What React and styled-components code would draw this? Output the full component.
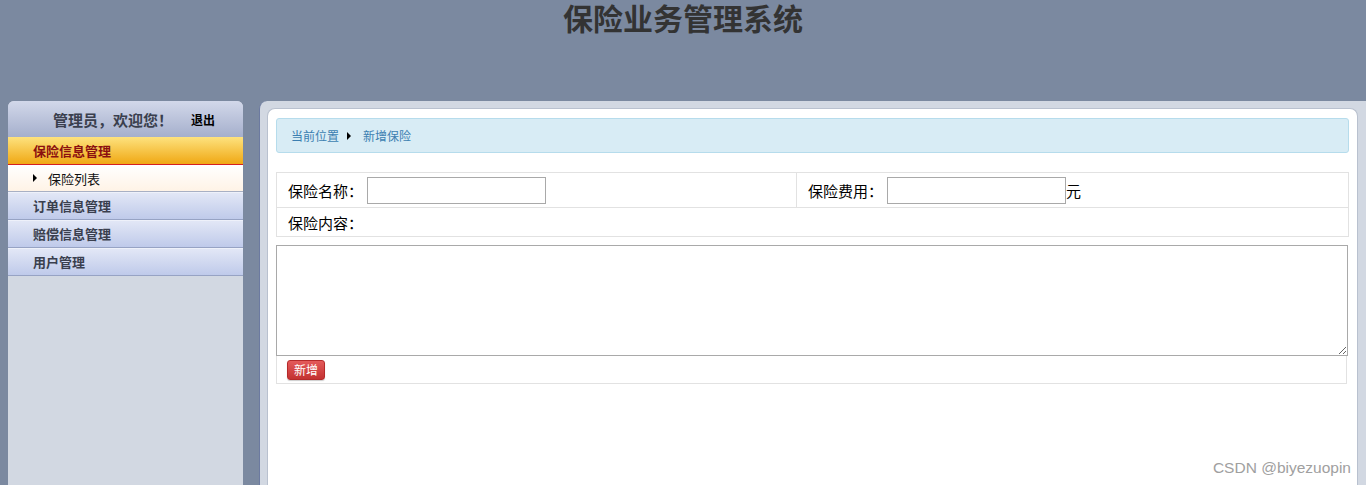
import React from 'react'
import styled, { createGlobalStyle } from 'styled-components';

const GlobalStyle = createGlobalStyle`
    html, body {
        margin: 0;
        padding: 0;
        background: #7b89a0;
        font-family: "Noto Sans CJK SC", "Liberation Sans", sans-serif;
        overflow: hidden;
    }
`;

const subMenus = ["订单信息管理", "赔偿信息管理", "用户管理"];

export default function App() {
    return (
        <React.Fragment>
            <GlobalStyle />
            <StyledPage>
                <StyledHeader>保险业务管理系统</StyledHeader>
                <StyledBody>
                    {/* ============ */}
                    {/*   SIDEBAR    */}
                    {/* ============ */}
                    <StyledSidebar>
                        <StyledWelcome>
                            <span>管理员，欢迎您！</span>
                            <StyledLogout>退出</StyledLogout>
                        </StyledWelcome>
                        <StyledMenuItem active>保险信息管理</StyledMenuItem>
                        <StyledSubItem>
                            <StyledArrow />
                            保险列表
                        </StyledSubItem>
                        {subMenus.map(m => (
                            <StyledMenuItem key={m}>{m}</StyledMenuItem>
                        ))}
                    </StyledSidebar>

                    {/* ============ */}
                    {/*    MAIN      */}
                    {/* ============ */}
                    <StyledMain>
                        <StyledPanel>
                            <StyledCrumb>
                                当前位置
                                <StyledArrow dark />
                                新增保险
                            </StyledCrumb>
                            <StyledTable>
                                <StyledRow>
                                    <StyledCell width="520px" divider>
                                        保险名称：<StyledInput />
                                    </StyledCell>
                                    <StyledCell>
                                        保险费用：<StyledInput />元
                                    </StyledCell>
                                </StyledRow>
                                <StyledRow last>
                                    <StyledCell>保险内容：</StyledCell>
                                </StyledRow>
                            </StyledTable>
                            <StyledTextarea />
                            <StyledButtonRow>
                                <StyledButton>新增</StyledButton>
                            </StyledButtonRow>
                        </StyledPanel>
                    </StyledMain>
                </StyledBody>
                <StyledMark>CSDN @biyezuopin</StyledMark>
            </StyledPage>
        </React.Fragment>
    )
}

const StyledPage = styled.div`
    position: relative;
    width: 1366px;
    height: 485px;
    overflow: hidden;
`;

const StyledHeader = styled.h1`
    margin: 0;
    padding-top: 1px;
    height: 100px;
    text-align: center;
    font-size: 30px;
    line-height: 32px;
    font-weight: bold;
    color: #333;
`;

const StyledBody = styled.div`
    display: flex;
    gap: 16px;
    padding-left: 8px;
    height: 384px;
`;

const StyledSidebar = styled.div`
    width: 235px;
    flex-shrink: 0;
    background: #d2d8e2;
    border-radius: 6px 6px 0 0;
    overflow: hidden;
`;

const StyledWelcome = styled.div`
    height: 36px;
    display: flex;
    align-items: center;
    padding-left: 45px;
    gap: 18px;
    background: linear-gradient(#d2d8ea, #a5afcc);
    font-size: 15px;
    font-weight: bold;
    color: #3a3f4e;
`;

const StyledLogout = styled.span`
    font-size: 12px;
    color: #000;
`;

const StyledMenuItem = styled.div`
    padding-left: 25px;
    font-size: 13px;
    font-weight: bold;
    color: ${props => props.active ? "#8b1010" : "#3a3f4e"};
    background: ${props => props.active
        ? "linear-gradient(#fde27e, #f0a814)"
        : "linear-gradient(#e2e7f6, #bfcaea)"};
    border-bottom: 1px solid ${props => props.active ? "#d42020" : "#97a3c4"};
    border-top: ${props => props.active ? "none" : "1px solid #eef1fa"};
    height: ${props => props.active ? "27px" : "26px"};
    line-height: ${props => props.active ? "27px" : "26px"};
`;

const StyledSubItem = styled.div`
    height: 26px;
    display: flex;
    align-items: center;
    padding-left: 25px;
    gap: 11px;
    font-size: 13px;
    color: #111;
    background: linear-gradient(#ffffff, #fff3e6);
    border-bottom: 1px solid #a8b0c4;
`;

const StyledArrow = styled.span`
    display: inline-block;
    width: 0;
    height: 0;
    border-top: 4px solid transparent;
    border-bottom: 4px solid transparent;
    border-left: 4px solid #000;
    margin: ${props => props.dark ? "0 12px 0 8px" : "0"};
`;

const StyledMain = styled.div`
    flex: 1;
    background: #d2d8e2;
    border-radius: 8px 0 0 0;
    border-left: 1px solid #6c7aa0;
    padding: 7px 8px 0 7px;
`;

const StyledPanel = styled.div`
    height: 100%;
    background: #fff;
    border: 1px solid #b9c1cf;
    border-bottom: none;
    border-radius: 8px 8px 0 0;
    padding: 9px 8px 0 8px;
    box-sizing: border-box;
`;

const StyledCrumb = styled.div`
    height: 35px;
    box-sizing: border-box;
    display: flex;
    align-items: center;
    padding-left: 14px;
    background: #d8ecf5;
    border: 1px solid #b6dcec;
    border-radius: 3px;
    font-size: 12px;
    color: #3c7fb1;
`;

const StyledTable = styled.div`
    margin-top: 19px;
    width: 1071px;
    border: 1px solid #e2e2e2;
`;

const StyledRow = styled.div`
    display: flex;
    height: ${props => props.last ? "28px" : "34px"};
    border-bottom: ${props => props.last ? "none" : "1px solid #e2e2e2"};
`;

const StyledCell = styled.div`
    display: flex;
    align-items: center;
    box-sizing: border-box;
    width: ${props => props.width || "auto"};
    flex: ${props => props.width ? "none" : "1"};
    padding-left: 11px;
    border-right: ${props => props.divider ? "1px solid #e2e2e2" : "none"};
    font-size: 15px;
    color: #000;
`;

const StyledInput = styled.input`
    width: 179px;
    height: 27px;
    box-sizing: border-box;
    border: 1px solid #a9a9a9;
    margin: 0 0 0 4px;
    padding: 0 2px;
`;

const StyledTextarea = styled.textarea`
    display: block;
    margin-top: 8px;
    width: 1072px;
    height: 111px;
    box-sizing: border-box;
    border: 1px solid #a9a9a9;
    resize: both;
`;

const StyledButtonRow = styled.div`
    width: 1071px;
    height: 28px;
    display: flex;
    align-items: center;
    padding-left: 10px;
    box-sizing: border-box;
    border: 1px solid #e2e2e2;
    border-top: none;
`;

const StyledButton = styled.button`
    width: 38px;
    height: 20px;
    padding: 0;
    border: 1px solid #b52a2a;
    border-radius: 3px;
    background: linear-gradient(#e45a5a, #c33232);
    color: #fff;
    font-size: 12px;
    font-family: "Noto Sans CJK SC", sans-serif;
    line-height: 18px;
    box-shadow: 0 1px 1px rgba(0,0,0,.2);
`;

const StyledMark = styled.div`
    position: absolute;
    right: 15px;
    bottom: 8px;
    font-family: "Liberation Sans", sans-serif;
    font-size: 15.5px;
    color: #a0a0a0;
`;
